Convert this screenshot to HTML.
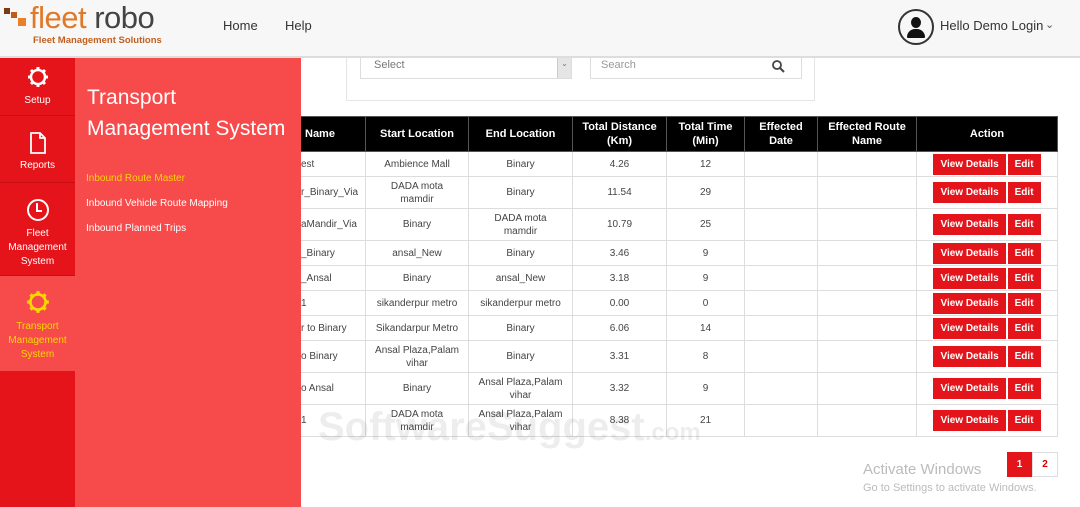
<!DOCTYPE html>
<html><head><style>
*{margin:0;padding:0;box-sizing:border-box}
body{width:1080px;height:507px;overflow:hidden;background:#fff;font-family:"Liberation Sans",sans-serif;position:relative}
.hdr{position:absolute;left:0;top:0;width:1080px;height:58px;background:#f8f7f7;border-bottom:2px solid #ddd;z-index:5}
.side{position:absolute;left:0;top:58px;width:75px;height:449px;background:#e5141a;z-index:4}
.si{position:absolute;left:0;width:75px;color:#fff;font-size:10px;text-align:center;border-bottom:1px solid #c80e13;line-height:14px}
.panel{position:absolute;left:75px;top:58px;width:226px;height:449px;background:#f64a4b;z-index:4;color:#fff}
table{position:absolute;left:300px;top:116px;width:758px;border-collapse:collapse;font-size:10px;color:#444;font-family:"Liberation Sans Narrow","Liberation Sans",sans-serif}
th{background:#000;color:#fff;font-size:11px;font-weight:bold;height:35px;border:1px solid #555;line-height:14px}
td{border:1px solid #ddd;text-align:center;line-height:13px}
.b{display:inline-block;background:#e3141a;color:#fff;font-size:10px;font-weight:bold;height:21px;line-height:21px;padding:0 7px;margin:0 1px}
</style></head><body>
<div class="hdr">
 <div style="position:absolute;left:4px;top:8px;width:26px;height:20px">
  <div style="position:absolute;left:0;top:0;width:6px;height:6px;background:#7b3a14"></div>
  <div style="position:absolute;left:7px;top:4px;width:6px;height:6px;background:#c25a18"></div>
  <div style="position:absolute;left:14px;top:10px;width:8px;height:8px;background:#e8812a"></div>
 </div>
 <div style="position:absolute;left:30px;top:0px;font-size:31px;color:#e07a2a;letter-spacing:-0.5px">fleet <span style="color:#444">robo</span></div>
 <div style="position:absolute;left:33px;top:35px;font-size:9.5px;font-weight:bold;color:#c06020">Fleet Management Solutions</div>
 <div style="position:absolute;left:223px;top:18px;font-size:13px;color:#333">Home</div>
 <div style="position:absolute;left:285px;top:18px;font-size:13px;color:#333">Help</div>
 <div style="position:absolute;left:898px;top:9px;width:36px;height:36px;border:2px solid #333;border-radius:50%;overflow:hidden">
  <div style="position:absolute;left:11px;top:6px;width:10px;height:11px;background:#111;border-radius:50%"></div>
  <div style="position:absolute;left:7px;top:18px;width:18px;height:9px;background:#111;border-radius:8px 8px 1px 1px"></div>
 </div>
 <div style="position:absolute;left:940px;top:18px;font-size:13px;color:#333">Hello Demo Login</div>
 <div style="position:absolute;left:1045px;top:18px;font-size:11px;color:#555">&#8964;</div>
</div>
<div class="side">
 <div class="si" style="top:0;height:58px"><svg width="24" height="24" viewBox="0 0 24 24" style="margin-top:7px"><circle cx="12" cy="12" r="7" fill="none" stroke="#fff" stroke-width="2.5"/><g stroke="#fff" stroke-width="3"><path d="M12 2v3M12 19v3M2 12h3M19 12h3M5 5l2 2M17 17l2 2M19 5l-2 2M5 19l2-2"/></g></svg><br>Setup</div>
 <div class="si" style="top:58px;height:67px"><svg width="18" height="22" viewBox="0 0 18 22" style="margin-top:16px"><path d="M2 1h9l5 5v15H2z M11 1v5h5" fill="none" stroke="#fff" stroke-width="1.8"/></svg><br>Reports</div>
 <div class="si" style="top:125px;height:93px"><svg width="24" height="24" viewBox="0 0 24 24" style="margin-top:15px"><circle cx="12" cy="12" r="10" fill="none" stroke="#fff" stroke-width="2"/><path d="M11 5v8h5" fill="none" stroke="#fff" stroke-width="2"/></svg><br>Fleet<br>Management<br>System</div>
 <div class="si" style="top:218px;height:95px;background:#f64a4b;color:#f5d800;border:none"><svg width="26" height="26" viewBox="0 0 24 24" style="margin-top:13px"><circle cx="12" cy="12" r="7" fill="none" stroke="#f5d800" stroke-width="2.5"/><g stroke="#f5d800" stroke-width="3"><path d="M12 2v3M12 19v3M2 12h3M19 12h3M5 5l2 2M17 17l2 2M19 5l-2 2M5 19l2-2"/></g></svg><br>Transport<br>Management<br>System</div>
</div>
<div class="panel">
 <div style="position:absolute;left:12px;top:24px;font-size:21px;line-height:31px">Transport<br>Management System</div>
 <div style="position:absolute;left:11px;top:115px;font-size:10px;color:#f5d800">Inbound Route Master</div>
 <div style="position:absolute;left:11px;top:140px;font-size:10px">Inbound Vehicle Route Mapping</div>
 <div style="position:absolute;left:11px;top:165px;font-size:10px">Inbound Planned Trips</div>
</div>
<div style="position:absolute;left:346px;top:44px;width:469px;height:57px;border:1px solid #e5e5e5;border-top:none"></div>
<div style="position:absolute;left:360px;top:52px;width:212px;height:27px;border:1px solid #ddd;font-size:11px;color:#777;padding:6px 13px">Select<div style="position:absolute;right:0;top:0;width:14px;height:25px;background:#e5e5e5;border-left:1px solid #ccc;font-size:8px;text-align:center;line-height:22px">&#8964;</div></div>
<div style="position:absolute;left:590px;top:52px;width:212px;height:27px;border:1px solid #ddd;font-size:11px;color:#999;padding:6px 10px">Search<svg width="13" height="13" viewBox="0 0 13 13" style="position:absolute;right:16px;top:7px"><circle cx="5" cy="5" r="4" fill="none" stroke="#444" stroke-width="1.8"/><path d="M8 8l4 4" stroke="#444" stroke-width="2"/></svg></div>
<table>
<tr><th style="width:65px;text-align:left;padding-left:4px">Name</th><th style="width:103px">Start Location</th><th style="width:104px">End Location</th><th style="width:94px">Total Distance<br>(Km)</th><th style="width:78px">Total Time<br>(Min)</th><th style="width:73px">Effected<br>Date</th><th style="width:99px">Effected Route<br>Name</th><th>Action</th></tr>
<tr style="height:25px"><td style="text-align:left">est</td><td>Ambience Mall</td><td>Binary</td><td>4.26</td><td>12</td><td></td><td></td><td><span class="b">View Details</span><span class="b">Edit</span></td></tr>
<tr style="height:32px"><td style="text-align:left">r_Binary_Via</td><td>DADA mota<br>mamdir</td><td>Binary</td><td>11.54</td><td>29</td><td></td><td></td><td><span class="b">View Details</span><span class="b">Edit</span></td></tr>
<tr style="height:32px"><td style="text-align:left">aMandir_Via</td><td>Binary</td><td>DADA mota<br>mamdir</td><td>10.79</td><td>25</td><td></td><td></td><td><span class="b">View Details</span><span class="b">Edit</span></td></tr>
<tr style="height:25px"><td style="text-align:left">_Binary</td><td>ansal_New</td><td>Binary</td><td>3.46</td><td>9</td><td></td><td></td><td><span class="b">View Details</span><span class="b">Edit</span></td></tr>
<tr style="height:25px"><td style="text-align:left">_Ansal</td><td>Binary</td><td>ansal_New</td><td>3.18</td><td>9</td><td></td><td></td><td><span class="b">View Details</span><span class="b">Edit</span></td></tr>
<tr style="height:25px"><td style="text-align:left">1</td><td>sikanderpur metro</td><td>sikanderpur metro</td><td>0.00</td><td>0</td><td></td><td></td><td><span class="b">View Details</span><span class="b">Edit</span></td></tr>
<tr style="height:25px"><td style="text-align:left">r to Binary</td><td>Sikandarpur Metro</td><td>Binary</td><td>6.06</td><td>14</td><td></td><td></td><td><span class="b">View Details</span><span class="b">Edit</span></td></tr>
<tr style="height:32px"><td style="text-align:left">o Binary</td><td>Ansal Plaza,Palam<br>vihar</td><td>Binary</td><td>3.31</td><td>8</td><td></td><td></td><td><span class="b">View Details</span><span class="b">Edit</span></td></tr>
<tr style="height:32px"><td style="text-align:left">o Ansal</td><td>Binary</td><td>Ansal Plaza,Palam<br>vihar</td><td>3.32</td><td>9</td><td></td><td></td><td><span class="b">View Details</span><span class="b">Edit</span></td></tr>
<tr style="height:32px"><td style="text-align:left">1</td><td>DADA mota<br>mamdir</td><td>Ansal Plaza,Palam<br>vihar</td><td>8.38</td><td>21</td><td></td><td></td><td><span class="b">View Details</span><span class="b">Edit</span></td></tr>
</table>
<div style="position:absolute;left:318px;top:405px;font-size:40px;font-weight:bold;color:rgba(0,0,0,0.07)">SoftwareSuggest<span style="font-size:24px">.com</span></div>
<div style="position:absolute;left:863px;top:461px;font-size:15px;color:#bbb">Activate Windows</div>
<div style="position:absolute;left:863px;top:482px;font-size:11px;color:#bbb">Go to Settings to activate Windows.</div>
<div style="position:absolute;left:1007px;top:452px;width:25px;height:25px;background:#e3141a;color:#fff;font-size:10px;font-weight:bold;text-align:center;line-height:25px">1</div>
<div style="position:absolute;left:1032px;top:452px;width:26px;height:25px;border:1px solid #ddd;color:#c00;font-size:10px;font-weight:bold;text-align:center;line-height:23px">2</div>
</body></html>
